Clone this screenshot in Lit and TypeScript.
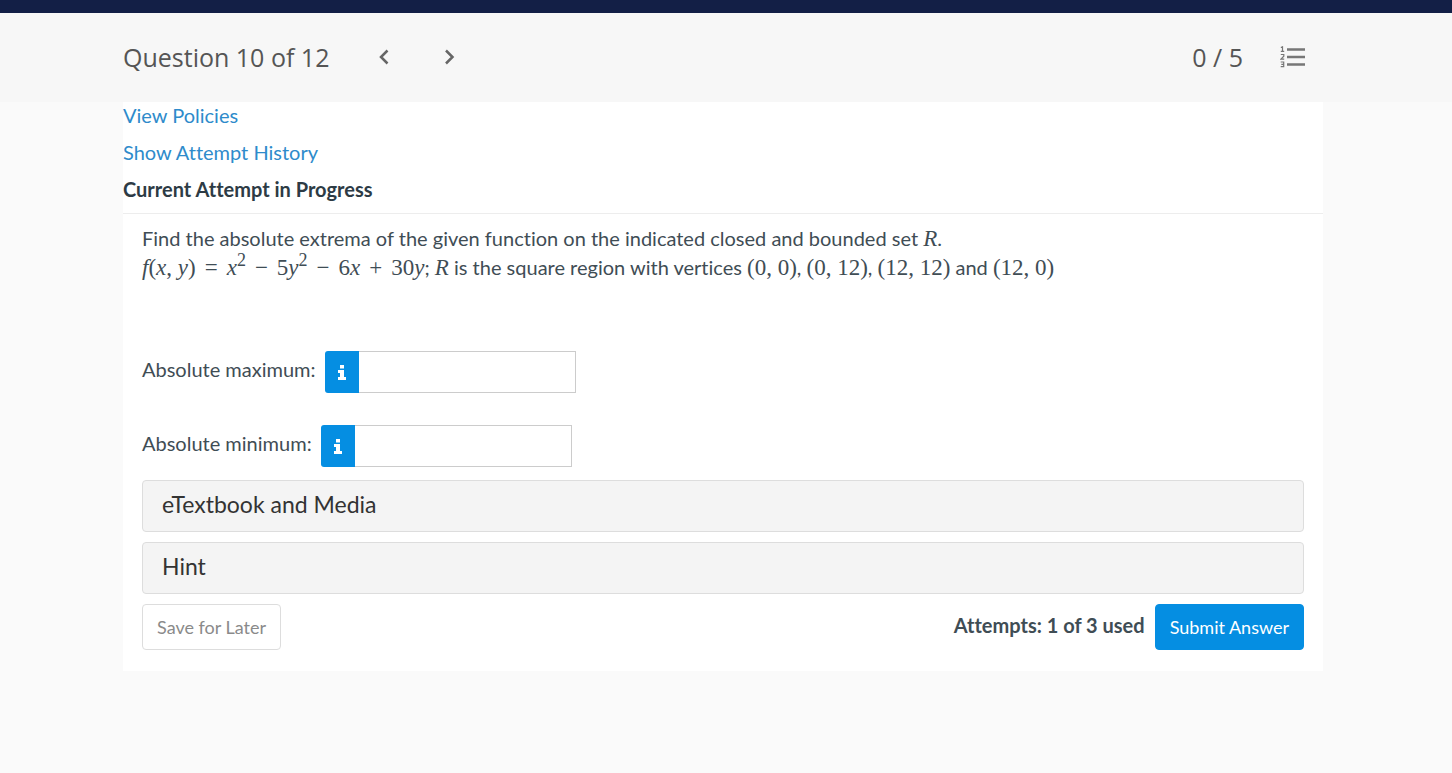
import { LitElement, html, css } from "lit";
import { customElement, property } from "lit/decorators.js";

@customElement("answer-field")
class AnswerField extends LitElement {
  @property() label = "";

  static styles = css`
    :host { display: flex; align-items: center; gap: 9px; }
    label { font-size: 20px; line-height: 24px; padding-bottom: 6px; }
    .group { display: flex; height: 42px; }
    .info {
      width: 34px; padding: 0; border: 0; border-radius: 3px 0 0 3px;
      background: #058ee2; display: flex; align-items: center; justify-content: center;
    }
    .info svg { display: block; }
    .box {
      box-sizing: border-box; width: 217px; padding: 0 10px; border: 1px solid #ccc;
      border-left: 0; border-radius: 0; outline: 0; background: #fff;
      font: 20px Lato, sans-serif; color: #37474f;
    }
  `;

  render() {
    return html`
      <label for="answer">${this.label}</label>
      <div class="group">
        <button class="info" type="button" aria-label="Input help">
          <svg width="8" height="15" viewBox="0 0 8 15" fill="#fff" aria-hidden="true">
            <path d="M2 0h4v3.500H2zM0 5h6v7h2v3H0v-3h2V8H0z" />
          </svg>
        </button>
        <input class="box" id="answer" type="text" />
      </div>
    `;
  }
}

@customElement("app-root")
class AppRoot extends LitElement {
  static styles = css`
    :host {
      display: block; min-height: 100vh; background: #fafafa;
      font-family: Lato, "Open Sans", sans-serif; font-size: 20px; color: #3f4d55;
      font-variant-ligatures: none;
    }
    .bar { height: 13px; background: #131f46; }
    .head {
      box-sizing: border-box; display: flex; align-items: center; height: 89px;
      padding: 0 147px 2px 123px;
      background: #f7f7f7; font-family: "Open Sans", sans-serif; color: #555;
    }
    h1 { margin: 0; font-size: 25px; font-weight: 400; line-height: 34px; }
    .nav { display: flex; gap: 41px; margin-left: 43px; }
    .score { margin-left: auto; font-size: 25px; line-height: 34px; }
    .icon {
      display: flex; align-items: center; justify-content: center; width: 24px; height: 24px;
      padding: 0; border: 0; background: none; color: #666;
    }
    .list { margin-left: 37px; width: 25px; color: #777; }
    .card { margin: 0 129px 0 123px; background: #fff; }
    .links {
      display: flex; flex-direction: column; align-items: flex-start; gap: 11px;
      padding-bottom: 11px; border-bottom: 1px solid #ededed; line-height: 26px;
    }
    a { color: #2e8bcb; text-decoration: none; }
    h2 { margin: 0; font-size: 20px; font-weight: 700; line-height: 26px; color: #2d3b45; }
    .body { padding: 10px 19px 21px; }
    .text { margin: 0; line-height: 29px; }
    .m { font-family: "Liberation Serif", serif; font-size: 23px; line-height: 20px; }
    .op { margin: 0 9px; }
    sup { font-size: 18px; line-height: 0; vertical-align: 9px; }
    .fields { display: flex; flex-direction: column; gap: 32px; padding: 69px 0 13px; }
    .panels { display: flex; flex-direction: column; gap: 10px; }
    .panel {
      width: 100%; height: 52px; padding: 0 19px 4px; text-align: left; border: 1px solid #ddd;
      border-radius: 4px; background: #f4f4f4; color: #333;
      font: 23px/30px Lato, sans-serif; font-variant-ligatures: none;
    }
    .foot { display: flex; align-items: center; gap: 10px; padding-top: 10px; }
    .btn {
      height: 46px; padding: 0 14px; border: 1px solid #ddd; border-radius: 4px;
      background: #fff; color: #8a8a8a; font: 18px/24px Lato, sans-serif;
    }
    .primary { background: #058ee2; border-color: #058ee2; color: #fff; }
    .used { margin-left: auto; font-weight: 700; line-height: 24px; padding-bottom: 4px; }
  `;

  render() {
    const op = (sign: string) => html`<span class="op">${sign}</span>`;
    const point = (a: number, b: number) => html`<span class="m">(${a}, ${b})</span>`;
    return html`
      <div class="bar"></div>
      <header class="head">
        <h1>Question 10 of 12</h1>
        <nav class="nav">
          <button class="icon" type="button" aria-label="Previous question">
            <svg width="24" height="24" viewBox="0 0 24 24" fill="none" stroke="currentColor" stroke-width="2.500"><path d="M15.500 5.500 9 12l6.500 6.500" /></svg>
          </button>
          <button class="icon" type="button" aria-label="Next question">
            <svg width="24" height="24" viewBox="0 0 24 24" fill="none" stroke="currentColor" stroke-width="2.500"><path d="M9 5.500 15.500 12 9 18.500" /></svg>
          </button>
        </nav>
        <div class="score">0 / 5</div>
        <button class="icon list" type="button" aria-label="Question list">
          <svg width="25" height="22" viewBox="0 0 25 22" fill="none" stroke="currentColor">
            <path d="M7 3.500h18M7 11h18M7 18.500h18" stroke-width="2.600" />
            <path d="M.8 1.500 2.500.8v4.700M.8 5.300h3.400M.8 8.500h3v1.700L.9 13.200h3.300M.7 16h3v4.700h-3M1.300 18.300h2.400" stroke-width="1.200" />
          </svg>
        </button>
      </header>
      <main class="card">
        <div class="links">
          <a href="#policies">View Policies</a>
          <a href="#history">Show Attempt History</a>
          <h2>Current Attempt in Progress</h2>
        </div>
        <div class="body">
          <p class="text">Find the absolute extrema of the given function on the indicated closed and bounded set <i class="m">R</i>.</p>
          <p class="text"><span class="m"><i>f</i>(<i>x</i>, <i>y</i>)${op("=")}<i>x</i><sup>2</sup>${op("−")}5<i>y</i><sup>2</sup>${op("−")}6<i>x</i>${op("+")}30<i>y</i></span>; <i class="m">R</i> is the square region with vertices ${point(0, 0)}, ${point(0, 12)}, ${point(12, 12)} and ${point(12, 0)}</p>
          <div class="fields">
            <answer-field label="Absolute maximum:"></answer-field>
            <answer-field label="Absolute minimum:"></answer-field>
          </div>
          <div class="panels">
            <button class="panel" type="button">eTextbook and Media</button>
            <button class="panel" type="button">Hint</button>
          </div>
          <div class="foot">
            <button class="btn" type="button">Save for Later</button>
            <span class="used">Attempts: 1 of 3 used</span>
            <button class="btn primary" type="button">Submit Answer</button>
          </div>
        </div>
      </main>
    `;
  }
}
